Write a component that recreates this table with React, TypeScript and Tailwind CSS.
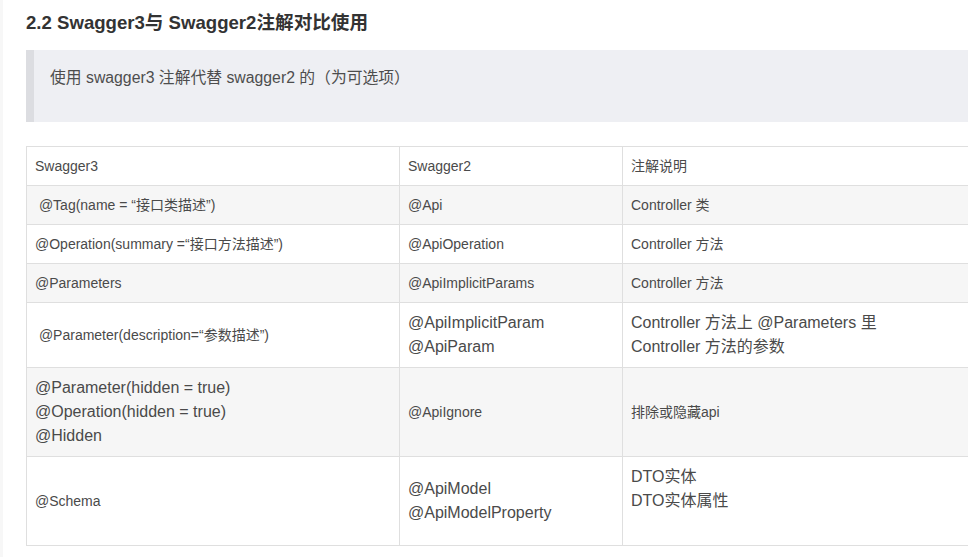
import React from 'react';

type Cell = { lines: string[]; big?: boolean };

const rows: Cell[][] = [
  [
    { lines: ['\u00a0@Tag(name = “接口类描述”)'] },
    { lines: ['@Api'] },
    { lines: ['Controller 类'] },
  ],
  [
    { lines: ['@Operation(summary =“接口方法描述”)'] },
    { lines: ['@ApiOperation'] },
    { lines: ['Controller 方法'] },
  ],
  [
    { lines: ['@Parameters'] },
    { lines: ['@ApiImplicitParams'] },
    { lines: ['Controller 方法'] },
  ],
  [
    { lines: ['\u00a0@Parameter(description=“参数描述”)'] },
    { lines: ['@ApiImplicitParam', '@ApiParam'], big: true },
    { lines: ['Controller 方法上 @Parameters 里', 'Controller 方法的参数'], big: true },
  ],
  [
    { lines: ['@Parameter(hidden = true)', '@Operation(hidden = true)', '@Hidden'], big: true },
    { lines: ['@ApiIgnore'] },
    { lines: ['排除或隐藏api'] },
  ],
  [
    { lines: ['@Schema'] },
    { lines: ['@ApiModel', '@ApiModelProperty'], big: true },
    { lines: ['DTO实体', 'DTO实体属性', '\u00a0'], big: true },
  ],
];

const font = { fontFamily: '"Liberation Sans", "Noto Sans CJK SC", sans-serif' };

function TableCell({ cell }: { cell: Cell }) {
  return (
    <td className="border border-[#dfdfdf] px-2 py-2 align-middle">
      <div
        className={
          cell.big
            ? 'text-[16px] leading-[24px] text-[#4a4a4a]'
            : 'text-[14px] leading-[22px] text-[#4a4a4a]'
        }
      >
        {cell.lines.map((l, i) => (
          <div key={i} className="whitespace-pre">
            {l}
          </div>
        ))}
      </div>
    </td>
  );
}

export default function App() {
  return (
    <div className="flex h-[557px] w-full overflow-hidden bg-white" style={font}>
      <div className="w-[3px] shrink-0 bg-[#f7f7f7]" />
      <div className="min-w-[1100px] pl-[23px] pt-[9px]">
        <h2 className="text-[18.6px] font-bold leading-[28px] text-[#333]">
          2.2 Swagger3与 Swagger2注解对比使用
        </h2>
        <blockquote className="mt-[13px] border-l-8 border-[#dcdde1] bg-[#eeeff3] pb-8 pl-4 pt-4">
          <p className="text-[15.8px] leading-[24px] text-[#4d4d4d]">
            使用 swagger3 注解代替 swagger2 的（为可选项）
          </p>
        </blockquote>
        <table className="mt-6 w-[1100px] table-fixed border-collapse">
          <colgroup>
            <col className="w-[373px]" />
            <col className="w-[223px]" />
            <col />
          </colgroup>
          <thead>
            <tr className="bg-white">
              <TableCell cell={{ lines: ['Swagger3'] }} />
              <TableCell cell={{ lines: ['Swagger2'] }} />
              <TableCell cell={{ lines: ['注解说明'] }} />
            </tr>
          </thead>
          <tbody>
            {rows.map((r, i) => (
              <tr key={i} className={i % 2 === 0 ? 'bg-[#f6f6f6]' : 'bg-white'}>
                {r.map((c, j) => (
                  <TableCell key={j} cell={c} />
                ))}
              </tr>
            ))}
          </tbody>
        </table>
      </div>
    </div>
  );
}
